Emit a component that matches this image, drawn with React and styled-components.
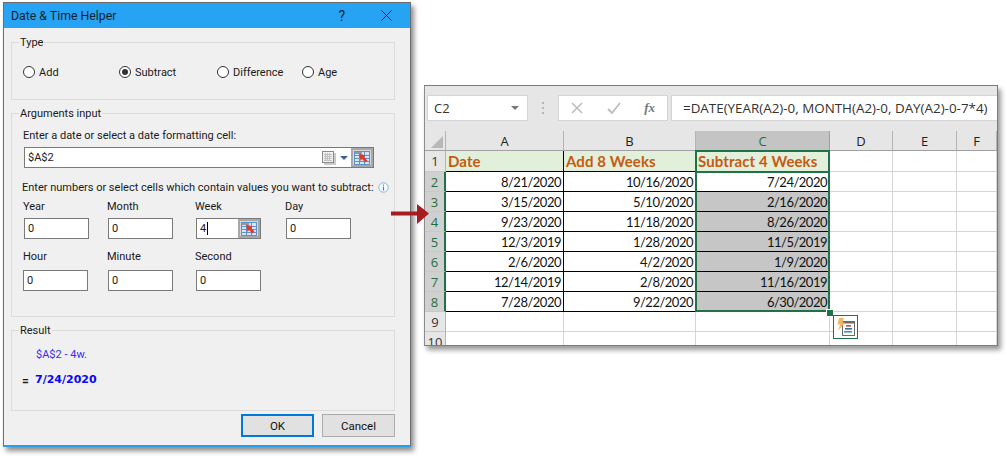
import React from 'react';
import styled, { createGlobalStyle } from 'styled-components';

const GlobalStyle = createGlobalStyle`
  html, body {
    margin: 0;
    padding: 0;
    background: #fff;
  }
`;

const Canvas = styled.div`
  position: relative;
  width: 1007px;
  height: 458px;
  overflow: hidden;
  background: #fff;
`;

/* ---- dialog ---- */
const Dialog = styled.div`
  position: absolute;
  left: 3px;
  top: 2px;
  width: 408px;
  height: 445px;
  box-sizing: border-box;
  background: #f0f0f0;
  border: 1px solid #6d6d6d;
  border-bottom: 2px solid #2a9fe8;
  box-shadow: 3px 4px 5px rgba(0, 0, 0, 0.45);
  font-family: Roboto, sans-serif;
  font-size: 11px;
  color: #1a1a1a;
  display: flex;
  flex-direction: column;
`;

const TitleBar = styled.div`
  height: 25px;
  flex: none;
  background: #27a3f3;
  display: flex;
  align-items: center;
  padding: 0 18px 0 7px;
  font-size: 12.3px;
  color: #10202c;
`;

const TitleText = styled.span`
  flex: 1;
`;

const HelpMark = styled.span`
  font-size: 14px;
  margin-right: 36px;
`;

const DialogBody = styled.div`
  flex: 1;
  display: flex;
  flex-direction: column;
  padding: 14px 15px 0 7px;
`;

const Group = styled.section`
  margin: 0 0 13px;
  height: ${p => p.$height}px;
  box-sizing: border-box;
  border: 1px solid #dcdcdc;
  position: relative;
`;

const Legend = styled.span`
  position: absolute;
  left: 7px;
  top: -7px;
  padding: 0 1px;
  line-height: 14px;
  background: #f0f0f0;
`;

const RadioRow = styled.div`
  display: grid;
  grid-template-columns: 96px 98px 85px 1fr;
  padding: 21px 0 0 11px;
`;

const RadioItem = styled.label`
  display: flex;
  align-items: center;
  gap: 4px;
  height: 16px;
`;

const RadioDot = styled.span`
  width: 12px;
  height: 12px;
  box-sizing: border-box;
  border: 1px solid #333;
  border-radius: 50%;
  background: #fff;
  display: flex;
  align-items: center;
  justify-content: center;
  &::after {
    content: '';
    display: ${p => (p.$on ? 'block' : 'none')};
    width: 6px;
    height: 6px;
    border-radius: 50%;
    background: #333;
  }
`;

const ArgsInner = styled.div`
  display: flex;
  flex-direction: column;
  padding: 13px 0 0 11px;
`;

const FieldLabel = styled.div`
  line-height: 18px;
  margin-bottom: -2px;
  white-space: nowrap;
`;

const DateInput = styled.div`
  width: 350px;
  height: 21px;
  margin: 4px 0 0 1px;
  box-sizing: border-box;
  border: 1px solid #7a7a7a;
  background: #fff;
  display: flex;
  align-items: center;
  padding: 0 0 0 3px;
`;

const InputValue = styled.span`
  flex: 1;
  line-height: 16px;
`;

const HintRow = styled.div`
  display: flex;
  align-items: center;
  gap: 4px;
  margin: 11px 0 0 -1px;
`;

const NumberGrid = styled.div`
  display: grid;
  grid-template-columns: 84px 88px 90px 70px;
  justify-content: start;
  margin-top: 3px;
`;

const NumberField = styled.div`
  height: 50px;
  display: flex;
  flex-direction: column;
  gap: ${p => p.$gap}px;
`;

const NumberBox = styled.div`
  width: 65px;
  height: 21px;
  margin-left: ${p => (p.$flush ? 0 : 1)}px;
  box-sizing: border-box;
  border: 1px solid #7a7a7a;
  background: #fff;
  padding: 0 0 0 3px;
  line-height: 19px;
  display: flex;
  align-items: center;
  justify-content: space-between;
`;

const Caret = styled.span`
  width: 1px;
  height: 13px;
  background: #000;
  margin: 0 auto 0 1px;
`;

const RefButton = styled.span`
  width: 22px;
  height: 19px;
  flex: none;
  box-sizing: border-box;
  border: 2px solid #a8a8a8;
  background: #d8d8d8;
  display: flex;
  align-items: center;
  justify-content: center;
`;

const ResultFormula = styled.div`
  margin: 16px 0 0 24px;
  line-height: 16px;
  color: #3b2df0;
`;

const ResultRow = styled.div`
  display: flex;
  align-items: center;
  height: 16px;
  margin: 8px 0 0 10px;
`;

const Equals = styled.span`
  width: 13px;
  font-weight: 700;
  font-size: 12px;
  padding-top: 3px;
`;

const ResultValue = styled.span`
  font-family: "DejaVu Sans", sans-serif;
  font-weight: 700;
  font-size: 11px;
  color: #0808f0;
`;

const ButtonRow = styled.div`
  display: flex;
  justify-content: flex-end;
  gap: 8px;
  margin-top: -10px;
`;

const DialogButton = styled.div`
  width: 73px;
  height: 23px;
  box-sizing: border-box;
  background: #e1e1e1;
  border: ${p => (p.$primary ? '2px solid #0078d7' : '1px solid #adadad')};
  display: flex;
  align-items: center;
  justify-content: center;
  color: #111;
  font-size: 11.500px;
`;

/* ---- arrow between the windows ---- */
const ArrowMark = styled.svg`
  position: absolute;
  left: 389px;
  top: 200px;
`;

/* ---- excel window ---- */
const Sheet = styled.div`
  position: absolute;
  left: 424px;
  top: 85px;
  width: 574px;
  height: 261px;
  box-sizing: border-box;
  background: #e6e6e6;
  border: 1px solid #7c7c7c;
  border-left-color: #8c8c8c;
  box-shadow: 3px 4px 5px rgba(0, 0, 0, 0.4);
`;

const SheetClip = styled.div`
  position: relative;
  height: 100%;
  overflow: hidden;
`;

const FormulaBar = styled.div`
  height: 45px;
  box-sizing: border-box;
  padding: 9px 0 0 2px;
  display: flex;
  align-items: flex-start;
  font-family: "Open Sans", sans-serif;
`;

const NameBox = styled.div`
  width: 101px;
  height: 26px;
  box-sizing: border-box;
  background: #fff;
  border: 1px solid #d4d4d4;
  display: flex;
  align-items: center;
  justify-content: space-between;
  padding: 0 8px 0 6px;
  font-size: 13px;
  color: #333;
`;

const DropCaret = styled.span`
  width: 0;
  height: 0;
  margin: ${p => (p.$tight ? '0 3px' : 0)};
  border-left: 4px solid transparent;
  border-right: 4px solid transparent;
  border-top: 4px solid ${p => (p.$tight ? '#3f5f8a' : '#777')};
`;

const Grip = styled.div`
  width: 30px;
  height: 26px;
  display: flex;
  flex-direction: column;
  align-items: center;
  justify-content: center;
  gap: 3px;
  span {
    width: 2px;
    height: 2px;
    background: #b5b5b5;
  }
`;

const FxBox = styled.div`
  width: 110px;
  height: 26px;
  box-sizing: border-box;
  background: #fff;
  border: 1px solid #d4d4d4;
  display: flex;
  align-items: center;
  padding: 0 12px;
  justify-content: space-between;
  color: #bcbcbc;
`;

const FxMark = styled.span`
  font-family: "Liberation Serif", serif;
  font-style: italic;
  font-weight: 700;
  font-size: 13px;
  color: #777;
`;

const FormulaInput = styled.div`
  flex: 1;
  height: 26px;
  margin-left: 3px;
  box-sizing: border-box;
  background: #fff;
  border: 1px solid #d4d4d4;
  border-right: none;
  display: flex;
  align-items: center;
  padding-left: 11px;
  font-size: 13.400px;
  color: #333;
  white-space: nowrap;
`;

const GridRow = styled.div`
  display: grid;
  grid-template-columns: 21px 118px 132px 134px 63px 64px 40px;
  height: ${p => p.$h}px;
  font-family: Lato, sans-serif;
  font-size: 13px;
  color: #111;
`;

const ColHead = styled.div`
  box-sizing: border-box;
  background: ${p => (p.$on ? '#c4c4c4' : '#e6e6e6')};
  border-right: 1px solid ${p => (p.$on ? '#a0a0a0' : '#b4b4b4')};
  border-bottom: 1px solid #a0a0a0;
  color: ${p => (p.$on ? '#1f6e43' : '#222')};
  display: flex;
  align-items: center;
  justify-content: center;
  font-family: "Open Sans", sans-serif;
  font-size: 13px;
`;

const Corner = styled.div`
  box-sizing: border-box;
  background: #e6e6e6;
  border-right: 1px solid #b4b4b4;
  border-bottom: 1px solid #a0a0a0;
  position: relative;
  &::after {
    content: '';
    position: absolute;
    right: 2px;
    bottom: 2px;
    border-left: 12px solid transparent;
    border-bottom: 12px solid #b8b8b8;
  }
`;

const RowHead = styled.div`
  box-sizing: border-box;
  background: ${p => (p.$on ? '#d0d0d0' : '#e6e6e6')};
  border-bottom: 1px solid #c8c8c8;
  border-right: ${p => (p.$on ? '2px solid #1f7246' : '1px solid #b4b4b4')};
  color: ${p => (p.$on ? '#1f6e43' : '#333')};
  display: flex;
  align-items: center;
  justify-content: center;
  font-family: "Open Sans", sans-serif;
  font-size: 13px;
`;

const Cell = styled.div`
  box-sizing: border-box;
  background: ${p => (p.$head ? '#e2efda' : p.$fill ? '#c6c6c6' : '#fff')};
  color: ${p => (p.$head ? '#c55a11' : '#111')};
  font-size: ${p => (p.$head ? 15 : 13)}px;
  font-weight: ${p => (p.$head ? 700 : 400)};
  letter-spacing: ${p => (p.$head ? '0.1px' : '-0.5px')};
  border-right: 1px solid ${p => (p.$line ? '#000' : '#d4d4d4')};
  border-bottom: 1px solid ${p => (p.$line ? '#000' : '#d4d4d4')};
  display: flex;
  align-items: center;
  justify-content: ${p => (p.$head ? 'flex-start' : 'flex-end')};
  padding: 0 ${p => (p.$head ? 0 : 2)}px 0 ${p => (p.$head ? 2 : 0)}px;
  white-space: nowrap;
`;

const SelectionHead = styled.div`
  position: absolute;
  left: 270px;
  top: 64px;
  width: 135px;
  height: 22px;
  box-sizing: border-box;
  border: 2px solid #1f7246;
  border-bottom: none;
  pointer-events: none;
`;

const SelectionBody = styled.div`
  position: absolute;
  left: 270px;
  top: 85px;
  width: 135px;
  height: 141px;
  box-sizing: border-box;
  border: 2px solid #1f7246;
  pointer-events: none;
`;

const FillHandle = styled.span`
  position: absolute;
  left: 401px;
  top: 223px;
  width: 6px;
  height: 6px;
  background: #1f7246;
  border: 1px solid #fff;
`;

const QuickAnalysis = styled.div`
  position: absolute;
  left: 408px;
  top: 229px;
  width: 25px;
  height: 24px;
  box-sizing: border-box;
  background: #fff;
  border: 1px solid #1f7246;
  display: flex;
  align-items: center;
  justify-content: center;
`;

function RefIcon() {
  return (
    <svg width="16" height="14" viewBox="0 0 16 14">
      <rect x="0.5" y="0.5" width="15" height="13" fill="#d5e6f6" stroke="#5b93c9" />
      <rect x="1" y="1" width="7" height="2" fill="#8f9aa6" />
      <path d="M0 4.500h16M0 7.500h16M0 10.500h16M5.500 3v11M10.500 0v14" stroke="#5b93c9" strokeWidth="1" />
      <path d="M5 2.500l6.500 2-1.500 1.500 3.500 3.500-2 2-3.500-3.500-1.500 2z" fill="#e03a2c" />
    </svg>
  );
}

function CalendarIcon() {
  return (
    <svg width="15" height="14" viewBox="0 0 15 14">
      <rect x="2" y="2" width="12" height="12" fill="#8c8c8c" opacity="0.45" />
      <rect x="0.5" y="0.5" width="11" height="11" fill="#f2f2f2" stroke="#8a8a8a" />
      <path d="M2 3.500h8M2 5.500h8M2 7.500h8M2 9.500h8M3.500 2v8M5.500 2v8M7.500 2v8" stroke="#c0c0c0" strokeWidth="1" />
    </svg>
  );
}

function InfoIcon() {
  return (
    <svg width="11" height="11" viewBox="0 0 11 11">
      <circle cx="5.500" cy="5.500" r="4.700" fill="#fff" stroke="#7fb0e6" />
      <path d="M5.500 2.400v1.300M5.500 4.800v3.600" stroke="#3c7fd0" strokeWidth="1.200" />
    </svg>
  );
}

function QuickIcon() {
  return (
    <svg width="20" height="20" viewBox="0 0 20 20">
      <rect x="6.500" y="4.500" width="12" height="14" fill="#fff" stroke="#6b6b6b" />
      <rect x="7" y="5" width="11" height="1.500" fill="#6b6b6b" />
      <path d="M3 1h5L6.500 5.500H9L2 14l2-6.500H1.500z" fill="#f3b95f" />
      <rect x="10" y="8" width="5" height="1.600" fill="#d9453a" />
      <rect x="9" y="11" width="7" height="1.600" fill="#3a6ea8" />
      <rect x="8" y="14" width="8" height="1.600" fill="#3f9a9a" />
    </svg>
  );
}

const types = [
  { label: 'Add' },
  { label: 'Subtract', on: true },
  { label: 'Difference' },
  { label: 'Age' },
];

const rows = [
  ['8/21/2020', '10/16/2020', '7/24/2020'],
  ['3/15/2020', '5/10/2020', '2/16/2020'],
  ['9/23/2020', '11/18/2020', '8/26/2020'],
  ['12/3/2019', '1/28/2020', '11/5/2019'],
  ['2/6/2020', '4/2/2020', '1/9/2020'],
  ['12/14/2019', '2/8/2020', '11/16/2019'],
  ['7/28/2020', '9/22/2020', '6/30/2020'],
];

function App() {
  return (
    <Canvas>
      <GlobalStyle />
      <Dialog>
        <TitleBar>
          <TitleText>Date &amp; Time Helper</TitleText>
          <HelpMark>?</HelpMark>
          <svg width="11" height="11" viewBox="0 0 11 11">
            <path d="M0.500 0.500l10 10M10.500 0.500l-10 10" stroke="#10202c" strokeWidth="1" fill="none" />
          </svg>
        </TitleBar>
        <DialogBody>
          <Group $height={58}>
            <Legend>Type</Legend>
            <RadioRow>
              {types.map(t => (
                <RadioItem key={t.label}>
                  <RadioDot $on={t.on} />
                  {t.label}
                </RadioItem>
              ))}
            </RadioRow>
          </Group>
          <Group $height={204}>
            <Legend>Arguments input</Legend>
            <ArgsInner>
              <FieldLabel>Enter a date or select a date formatting cell:</FieldLabel>
              <DateInput>
                <InputValue>$A$2</InputValue>
                <CalendarIcon />
                <DropCaret $tight />
                <RefButton><RefIcon /></RefButton>
              </DateInput>
              <HintRow>
                <FieldLabel>Enter numbers or select cells which contain values you want to subtract:</FieldLabel>
                <InfoIcon />
              </HintRow>
              <NumberGrid>
                <NumberField $gap={4}>
                  <FieldLabel>Year</FieldLabel>
                  <NumberBox>0</NumberBox>
                </NumberField>
                <NumberField $gap={4}>
                  <FieldLabel>Month</FieldLabel>
                  <NumberBox>0</NumberBox>
                </NumberField>
                <NumberField $gap={4}>
                  <FieldLabel>Week</FieldLabel>
                  <NumberBox>
                    4<Caret />
                    <RefButton><RefIcon /></RefButton>
                  </NumberBox>
                </NumberField>
                <NumberField $gap={4}>
                  <FieldLabel>Day</FieldLabel>
                  <NumberBox>0</NumberBox>
                </NumberField>
                <NumberField $gap={6}>
                  <FieldLabel>Hour</FieldLabel>
                  <NumberBox $flush>0</NumberBox>
                </NumberField>
                <NumberField $gap={6}>
                  <FieldLabel>Minute</FieldLabel>
                  <NumberBox>0</NumberBox>
                </NumberField>
                <NumberField $gap={6}>
                  <FieldLabel>Second</FieldLabel>
                  <NumberBox>0</NumberBox>
                </NumberField>
              </NumberGrid>
            </ArgsInner>
          </Group>
          <Group $height={81}>
            <Legend>Result</Legend>
            <ResultFormula>$A$2 - 4w.</ResultFormula>
            <ResultRow>
              <Equals>=</Equals>
              <ResultValue>7/24/2020</ResultValue>
            </ResultRow>
          </Group>
          <ButtonRow>
            <DialogButton $primary>OK</DialogButton>
            <DialogButton>Cancel</DialogButton>
          </ButtonRow>
        </DialogBody>
      </Dialog>

      <Sheet>
        <SheetClip>
          <FormulaBar>
            <NameBox>C2<DropCaret /></NameBox>
            <Grip><span /><span /><span /></Grip>
            <FxBox>
              <svg width="12" height="12" viewBox="0 0 12 12">
                <path d="M1 1l10 10M11 1L1 11" stroke="#bcbcbc" strokeWidth="1.500" fill="none" />
              </svg>
              <svg width="14" height="12" viewBox="0 0 14 12">
                <path d="M1 7l4 4 8-10" stroke="#bcbcbc" strokeWidth="1.800" fill="none" />
              </svg>
              <FxMark>fx</FxMark>
            </FxBox>
            <FormulaInput>=DATE(YEAR(A2)-0, MONTH(A2)-0, DAY(A2)-0-7*4)</FormulaInput>
          </FormulaBar>
          <GridRow $h={20}>
            <Corner />
            <ColHead>A</ColHead>
            <ColHead>B</ColHead>
            <ColHead $on>C</ColHead>
            <ColHead>D</ColHead>
            <ColHead>E</ColHead>
            <ColHead>F</ColHead>
          </GridRow>
          <GridRow $h={21}>
            <RowHead>1</RowHead>
            <Cell $head $line>Date</Cell>
            <Cell $head $line>Add 8 Weeks</Cell>
            <Cell $head $line>Subtract 4 Weeks</Cell>
            <Cell /><Cell /><Cell />
          </GridRow>
          {rows.map((r, i) => (
            <GridRow $h={20} key={r[0]}>
              <RowHead $on>{i + 2}</RowHead>
              <Cell $line>{r[0]}</Cell>
              <Cell $line>{r[1]}</Cell>
              <Cell $line $fill={i > 0}>{r[2]}</Cell>
              <Cell /><Cell /><Cell />
            </GridRow>
          ))}
          <GridRow $h={20}>
            <RowHead>9</RowHead>
            <Cell /><Cell /><Cell /><Cell /><Cell /><Cell />
          </GridRow>
          <GridRow $h={20}>
            <RowHead>10</RowHead>
            <Cell /><Cell /><Cell /><Cell /><Cell /><Cell />
          </GridRow>
          <SelectionHead />
          <SelectionBody />
          <FillHandle />
          <QuickAnalysis><QuickIcon /></QuickAnalysis>
        </SheetClip>
      </Sheet>

      <ArrowMark width="42" height="28" viewBox="0 0 42 28">
        <path d="M2 13.500h30" stroke="#a81c20" strokeWidth="4" fill="none" />
        <path d="M28 4l12 9.500L28 24z" fill="#a81c20" />
      </ArrowMark>
    </Canvas>
  );
}

export default App;
